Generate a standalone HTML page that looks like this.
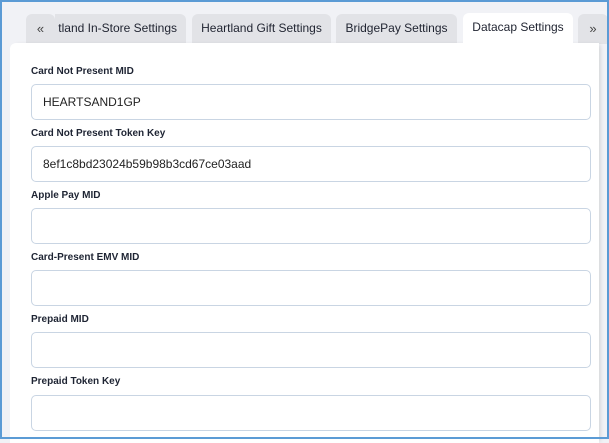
<!DOCTYPE html>
<html><head><style>
*{margin:0;padding:0;box-sizing:border-box}
body{width:609px;height:439px;overflow:hidden;background:#f1f2f6;font-family:"Liberation Sans",sans-serif;position:relative}
.frame{position:absolute;inset:0;border:2px solid #5b9bd5;pointer-events:none;z-index:10}
.tab{position:absolute;top:14px;height:30px;background:#e2e3e7;border-radius:6px 6px 0 0;font-size:12px;color:#1f2330;line-height:29px;text-align:center;white-space:nowrap;overflow:hidden}
.tab.act{background:#fff;top:13px;height:32px;z-index:2}
.card{position:absolute;left:10px;top:43px;width:589px;height:400px;background:#fff;border-radius:6px 0 0 0;box-shadow:3px 0 5px -2px rgba(0,0,0,.15)}
.lbl{position:absolute;left:31px;font-size:10px;font-weight:bold;color:#1e2433}
.inp{position:absolute;left:31px;width:560px;height:36px;border:1px solid #c9d5e3;border-radius:5px;background:#fff;font-size:12px;color:#222;padding-left:11px;line-height:34px}
</style></head><body>
<div class="tab" style="left:26px;width:29px;font-size:13px;color:#444">«</div>
<div class="tab" style="left:55px;width:131px;text-align:right;padding-right:9px;border-radius:0 6px 0 0">tland In-Store Settings</div>
<div class="tab" style="left:192px;width:139px">Heartland Gift Settings</div>
<div class="tab" style="left:336px;width:121px">BridgePay Settings</div>
<div class="tab act" style="left:463px;width:110px">Datacap Settings</div>
<div class="tab" style="left:578px;width:30px;font-size:13px;color:#444">»</div>
<div class="card"></div>
<div class="lbl" style="top:66px">Card Not Present MID</div>
<div class="inp" style="top:84px">HEARTSAND1GP</div>
<div class="lbl" style="top:128px">Card Not Present Token Key</div>
<div class="inp" style="top:146px">8ef1c8bd23024b59b98b3cd67ce03aad</div>
<div class="lbl" style="top:190px">Apple Pay MID</div>
<div class="inp" style="top:208px"></div>
<div class="lbl" style="top:252px">Card-Present EMV MID</div>
<div class="inp" style="top:270px"></div>
<div class="lbl" style="top:314px">Prepaid MID</div>
<div class="inp" style="top:332px"></div>
<div class="lbl" style="top:376px">Prepaid Token Key</div>
<div class="inp" style="top:395px"></div>
<div class="frame"></div>
</body></html>
